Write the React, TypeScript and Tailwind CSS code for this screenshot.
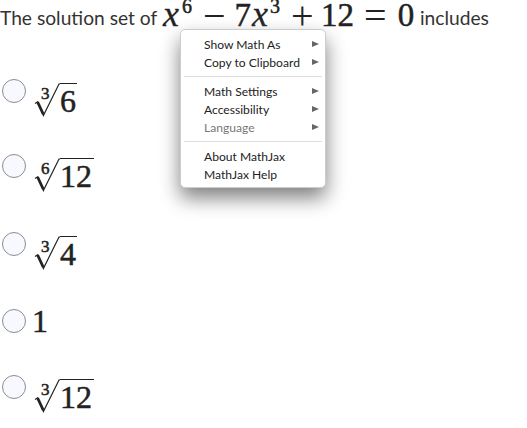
import React from 'react';

const mathFont = "font-['Liberation_Serif',serif] text-[#222] [-webkit-text-stroke:0.5px_#222]";

function Root({ index, value, width }: { index: string; value: string; width: number }) {
  return (
    <span className={`relative mt-[4px] flex items-start ${mathFont}`}>
      <svg width="26" height="34" viewBox="0 0 26 34" className="shrink-0" fill="none">
        <path d="M1 20.5 L3.6 18.8 L9.4 32.5 L25 1 L26 1" stroke="#222" strokeWidth="1.2" />
        <path d="M3.6 19 L9.2 31" stroke="#222" strokeWidth="2.8" />
      </svg>
      <span className="absolute left-[7px] top-[1px] text-[17px] leading-[20px]">{index}</span>
      <span
        className="border-t-[1.5px] border-[#222] text-[32px] leading-[34px]"
        style={{ width }}
      >
        {value}
      </span>
    </span>
  );
}

function Option({ children, className }: { children: React.ReactNode; className: string }) {
  return (
    <div className={`flex items-start ${className}`}>
      <span className="h-[24px] w-[24px] shrink-0 rounded-full border border-[#8a8d91] bg-[#f8f9ff]" />
      <div className="ml-[8px]">{children}</div>
    </div>
  );
}

const groups: { label: string; arrow?: boolean; muted?: boolean }[][] = [
  [
    { label: 'Show Math As', arrow: true },
    { label: 'Copy to Clipboard', arrow: true },
  ],
  [
    { label: 'Math Settings', arrow: true },
    { label: 'Accessibility', arrow: true },
    { label: 'Language', arrow: true, muted: true },
  ],
  [{ label: 'About MathJax' }, { label: 'MathJax Help' }],
];

function ContextMenu() {
  return (
    <div className="absolute left-[180px] top-[29px] w-[146px] rounded-[5px] border border-[#ccc] bg-white pb-[3px] pt-[6px] font-['Lato',sans-serif] text-[12.1px] shadow-[0_10px_20px_#808080]">
      {groups.map((group, i) => (
        <div key={i}>
          {i > 0 && <div className="mx-[3px] mb-[6px] mt-[4px] h-px bg-[#ddd]" />}
          {group.map((item) => (
            <div
              key={item.label}
              className={`flex h-[18px] items-center justify-between pl-[23px] pr-[6px] ${
                item.muted ? 'text-[#777]' : 'text-[#222]'
              }`}
            >
              <span>{item.label}</span>
              {item.arrow && <span className="mb-[2px] h-0 w-0 border-y-[3.5px] border-l-[7px] border-y-transparent border-l-[#666]" />}
            </div>
          ))}
        </div>
      ))}
    </div>
  );
}

const opClass = 'relative top-[3px] text-[40px] leading-[20px] [-webkit-text-stroke:0px]';
const supClass = 'relative -top-[13px] text-[20px] leading-[20px]';
const varClass = 'text-[36px] italic [-webkit-text-stroke:0.3px_#222]';

export default function App() {
  return (
    <div className="relative h-[428px] w-[527px] overflow-hidden bg-white font-['Lato',sans-serif]">
      <div className="flex h-[36px] items-baseline whitespace-nowrap pt-[2.5px] text-[19.2px] leading-[24px] text-[#333]">
        <span className="relative -top-[1px] w-[163px]">The solution set of</span>
        <span className={`flex w-[257px] items-baseline text-[33px] leading-[20px] ${mathFont}`}>
          <span className={varClass}>x</span>
          <span className={`ml-[3px] ${supClass}`}>6</span>
          <span className={`ml-[11px] ${opClass}`}>−</span>
          <span className="ml-[9px]">7</span>
          <span className={`ml-[1px] ${varClass}`}>x</span>
          <span className={`ml-[2px] ${supClass}`}>3</span>
          <span className={`ml-[11px] ${opClass}`}>+</span>
          <span className="ml-[7.5px]">12</span>
          <span className={`ml-[10px] ${opClass}`}>=</span>
          <span className="ml-[11px]">0</span>
        </span>
        <span className="relative -top-[1px]">includes</span>
      </div>

      <div className="pl-[2px]">
        <Option className="mt-[43px] h-[75px]">
          <Root index="3" value="6" width={17} />
        </Option>
        <Option className="h-[78px]">
          <Root index="6" value="12" width={34} />
        </Option>
        <Option className="h-[77px]">
          <Root index="3" value="4" width={17} />
        </Option>
        <Option className="h-[66px]">
          <span className={`-ml-[2px] block text-[32px] leading-[24px] ${mathFont}`}>1</span>
        </Option>
        <Option className="h-[50px]">
          <Root index="3" value="12" width={34} />
        </Option>
      </div>

      <ContextMenu />
    </div>
  );
}
